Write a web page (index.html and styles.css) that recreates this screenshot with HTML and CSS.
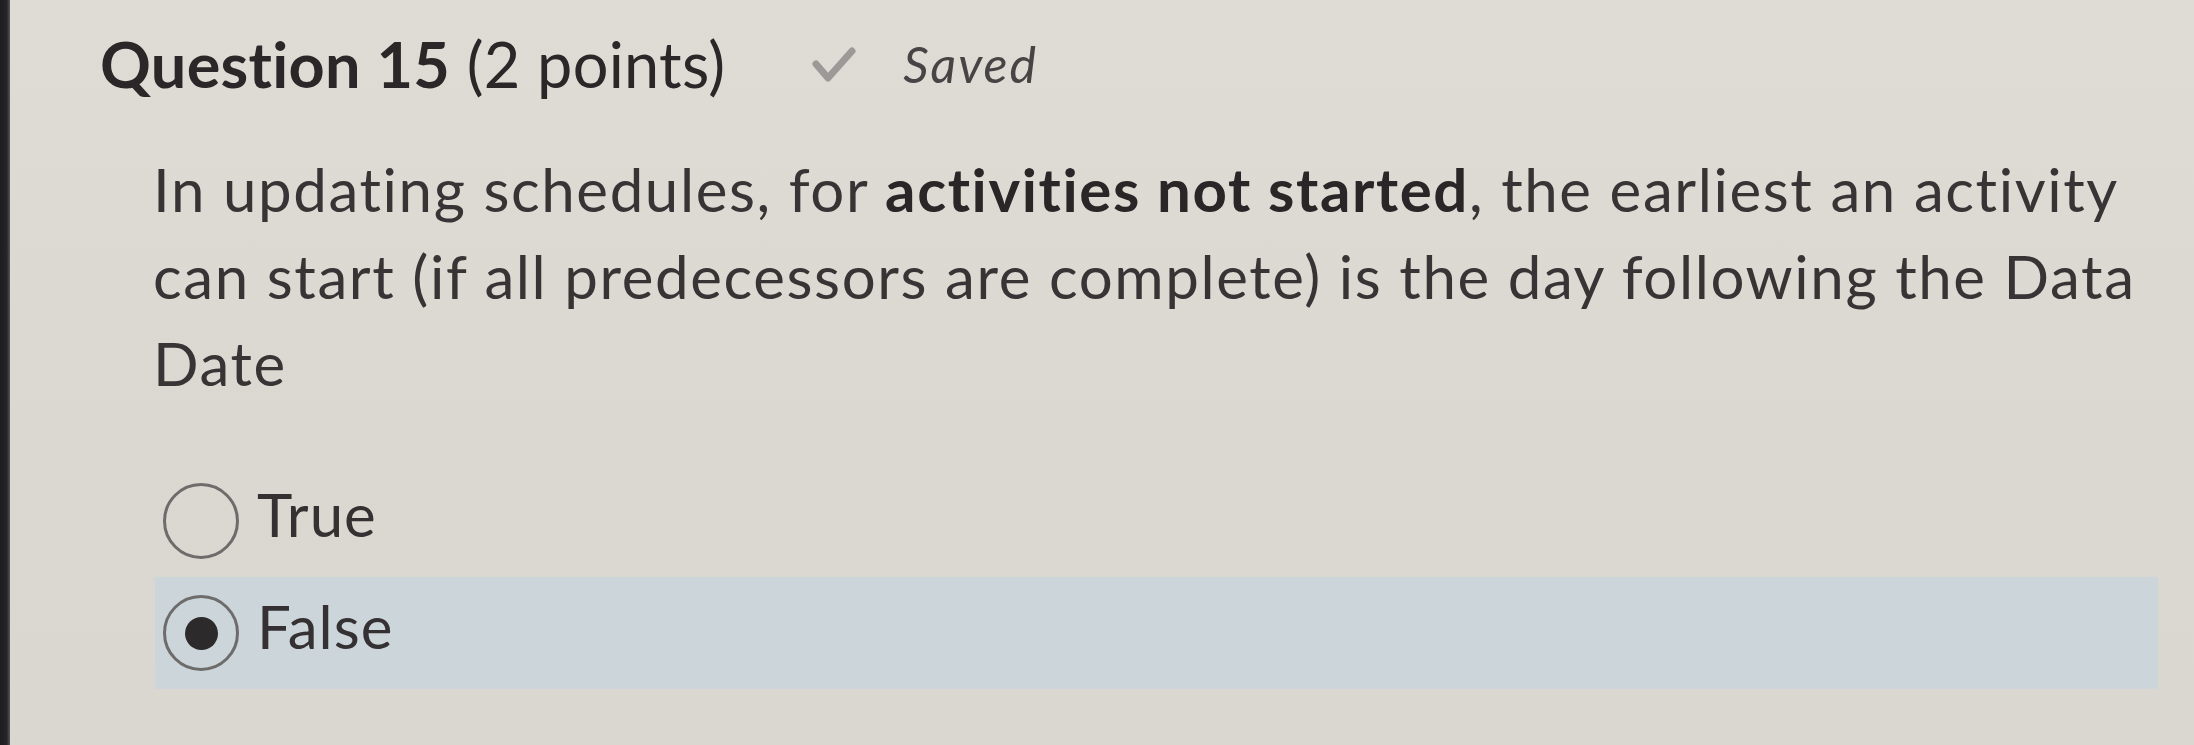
FILE: index.html
```html
<!DOCTYPE html>
<html lang="en">
<head>
<meta charset="utf-8">
<title>Question 15</title>
<link rel="stylesheet" href="styles.css">
</head>
<body>
<div class="screen">
  <div class="edge"></div>
  <main class="question">
    <header class="q-head">
      <h2 class="q-title"><span class="q-num">Question 15</span> <span class="q-pts">(2 points)</span></h2>
      <span class="q-status">
        <svg class="check" width="46" height="38" viewBox="0 0 46 38" aria-hidden="true">
          <path d="M5 19 L17 33 L41 6" fill="none" stroke="#9b9a98" stroke-width="7" stroke-linecap="round" stroke-linejoin="round"/>
        </svg>
        <em class="saved">Saved</em>
      </span>
    </header>
    <div class="q-body">
      <p class="q-text">In updating schedules, for <strong>activities not started</strong>, the earliest an activity can start (if all predecessors are complete) is the day following the Data Date</p>
      <ul class="answers">
        <li class="answer"><span class="radio"></span><span class="label">True</span></li>
        <li class="answer selected"><span class="radio"><span class="dot"></span></span><span class="label">False</span></li>
      </ul>
    </div>
  </main>
</div>
</body>
</html>
```
FILE: styles.css
```css
html, body {
  margin: 0;
  padding: 0;
}

body {
  background: #dcd9d2;
  font-family: Lato, "Open Sans", sans-serif;
  font-variant-ligatures: none;
  color: #353132;
}

.screen {
  display: flex;
  height: 745px;
  overflow: hidden;
  background: linear-gradient(180deg, #dfdcd6 0%, #dbd8d1 55%, #dad7d0 100%);
}

.edge {
  flex: 0 0 10px;
  background: linear-gradient(90deg, #1c1c20 0%, #26262a 70%, #5a5958 100%);
}

.question {
  flex: 1;
  padding: 24px 0 0 90px;
}

.q-head {
  display: flex;
  align-items: flex-start;
  gap: 86px;
}

.q-title {
  margin: 0;
  font-size: 63px;
  line-height: 80px;
  font-weight: 400;
  letter-spacing: 0.3px;
  color: #2b2728;
  white-space: nowrap;
}

.q-num {
  font-weight: 700;
}

.q-status {
  display: flex;
  align-items: flex-start;
  gap: 46px;
  margin-top: 10px;
}

.check {
  display: block;
  margin-top: 11px;
}

.saved {
  font-style: italic;
  font-size: 50px;
  line-height: 60px;
  letter-spacing: 2px;
  color: #474445;
}

.q-body {
  margin-left: 53px;
  width: 2030px;
}

.q-text {
  margin: 42px 0 0;
  font-size: 60px;
  line-height: 87px;
  letter-spacing: 1.6px;
  color: #383435;
}

.q-text strong {
  font-weight: 700;
  color: #2a2627;
}

.answers {
  list-style: none;
  margin: 58px 0 0 2px;
  padding: 0;
  width: 2003px;
}

.answer {
  display: flex;
  align-items: flex-start;
  height: 112px;
  padding-left: 8px;
  box-sizing: border-box;
}

.answer.selected {
  background: #cbd5da;
}

.radio {
  flex: 0 0 auto;
  width: 76px;
  height: 76px;
  margin-top: 18px;
  box-sizing: border-box;
  border: 3px solid #6e6c6b;
  border-radius: 50%;
  display: flex;
  align-items: center;
  justify-content: center;
}

.dot {
  width: 33px;
  height: 33px;
  border-radius: 50%;
  background: #2c2a2b;
}

.label {
  margin: 13px 0 0 18px;
  font-size: 60px;
  line-height: 72px;
  letter-spacing: 1px;
  color: #353132;
}
```
